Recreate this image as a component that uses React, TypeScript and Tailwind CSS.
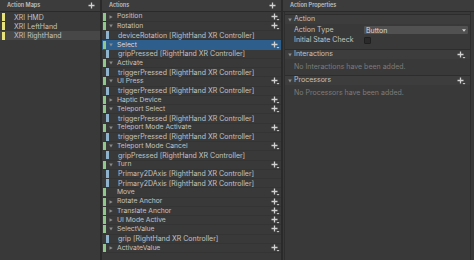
import clsx from 'clsx'

type Row = {
  label: string
  kind: 'action' | 'binding'
  arrow?: 'right' | 'down'
  selected?: boolean
  noPlus?: boolean
}

const ACTIONS: Row[] = [
  { label: 'Position', kind: 'action', arrow: 'right' },
  { label: 'Rotation', kind: 'action', arrow: 'down' },
  { label: 'deviceRotation [RightHand XR Controller]', kind: 'binding' },
  { label: 'Select', kind: 'action', arrow: 'down', selected: true },
  { label: 'gripPressed [RightHand XR Controller]', kind: 'binding' },
  { label: 'Activate', kind: 'action', arrow: 'down', noPlus: true },
  { label: 'triggerPressed [RightHand XR Controller]', kind: 'binding' },
  { label: 'UI Press', kind: 'action', arrow: 'down' },
  { label: 'triggerPressed [RightHand XR Controller]', kind: 'binding' },
  { label: 'Haptic Device', kind: 'action', arrow: 'right' },
  { label: 'Teleport Select', kind: 'action', arrow: 'down' },
  { label: 'triggerPressed [RightHand XR Controller]', kind: 'binding' },
  { label: 'Teleport Mode Activate', kind: 'action', arrow: 'down' },
  { label: 'triggerPressed [RightHand XR Controller]', kind: 'binding' },
  { label: 'Teleport Mode Cancel', kind: 'action', arrow: 'down' },
  { label: 'gripPressed [RightHand XR Controller]', kind: 'binding' },
  { label: 'Turn', kind: 'action', arrow: 'down' },
  { label: 'Primary2DAxis [RightHand XR Controller]', kind: 'binding' },
  { label: 'Primary2DAxis [RightHand XR Controller]', kind: 'binding' },
  { label: 'Move', kind: 'action' },
  { label: 'Rotate Anchor', kind: 'action', arrow: 'right' },
  { label: 'Translate Anchor', kind: 'action', arrow: 'right' },
  { label: 'UI Mode Active', kind: 'action', arrow: 'right' },
  { label: 'SelectValue', kind: 'action', arrow: 'down' },
  { label: 'grip [RightHand XR Controller]', kind: 'binding' },
  { label: 'ActivateValue', kind: 'action', arrow: 'right' },
]

const MAPS = ['XRI HMD', 'XRI LeftHand', 'XRI RightHand']

function PlusIcon({ dropdown = true }: { dropdown?: boolean }) {
  return (
    <svg width="9" height="8" viewBox="0 0 9 8" className="shrink-0">
      <path d="M3.5 0.5v6M0.5 3.5h6" stroke="#d2d2d2" strokeWidth="1.3" />
      {dropdown && <path d="M5.5 6h3l-1.5 1.6z" fill="#d2d2d2" />}
    </svg>
  )
}

function Arrow({ dir }: { dir: 'right' | 'down' }) {
  return (
    <svg width="4" height="4" viewBox="0 0 4 4" className="shrink-0">
      {dir === 'right' ? <path d="M0.5 0.3L3.7 2L0.5 3.7z" fill="#8c8c8c" /> : <path d="M0.2 0.6L3.8 0.6L2 3.6z" fill="#8c8c8c" />}
    </svg>
  )
}

function PanelHeader({ title, plus }: { title: string; plus?: boolean }) {
  return (
    <div className="h-[12px] flex items-center justify-between pl-[7px] pr-[3px] bg-[#3c3c3c] border-b border-[#2a2a2a] text-[5.5px] font-semibold text-[#c0c0c0]">
      <span>{title}</span>
      {plus && <PlusIcon dropdown={false} />}
    </div>
  )
}

function SectionHeader({ title, plus }: { title: string; plus?: boolean }) {
  return (
    <div className="h-[10px] flex items-center pl-[3px] pr-[4px] bg-[#3d3d3d] border-t border-[#2d2d2d]">
      <Arrow dir="down" />
      <span className="ml-[2px] text-[7px] flex-1">{title}</span>
      {plus && <PlusIcon />}
    </div>
  )
}

export default function App() {
  return (
    <div className="w-[474px] h-[260px] flex bg-[#393939] font-['Inter',sans-serif] text-[#c2c2c2] overflow-hidden">
      {/* Action maps */}
      <div className="w-[102px] shrink-0 flex flex-col border-r-2 border-[#2a2a2a]">
        <PanelHeader title="Action Maps" plus />
        <div className="pt-[0.5px]">
          {MAPS.map((m, i) => (
            <div key={m} className={clsx('h-[9.25px] flex items-center', i === 2 && 'bg-[#474747]')}>
              <div className="ml-[2px] w-[3px] h-[8px] bg-[#e8e27c]" />
              <span className="ml-[9px] text-[7px] leading-none">{m}</span>
            </div>
          ))}
        </div>
      </div>

      {/* Actions */}
      <div className="w-[181px] shrink-0 flex flex-col border-r-2 border-[#2a2a2a]">
        <PanelHeader title="Actions" plus />
        <div className="pt-[0.5px]">
          {ACTIONS.map((r, i) => (
            <div
              key={i}
              className={clsx(
                'h-[9.25px] flex items-center',
                r.selected ? 'bg-[#2d5e8c] text-[#dcdcdc]' : 'border-b border-[#343434]'
              )}
            >
              {r.kind === 'action' ? (
                <>
                  <div className="ml-[1px] w-[3px] h-[8px] bg-[#8fc88a]" />
                  <div className="w-[8px] flex justify-center ml-[1px]">{r.arrow && <Arrow dir={r.arrow} />}</div>
                  <span className="ml-[2px] text-[6.75px] leading-none flex-1">{r.label}</span>
                  {!r.noPlus && <span className="mr-[1px]"><PlusIcon /></span>}
                </>
              ) : (
                <>
                  <div className="ml-[4px] w-[3px] h-[8px] bg-[#8fb3cc]" />
                  <span className="ml-[9px] text-[7px] leading-none">{r.label}</span>
                </>
              )}
            </div>
          ))}
        </div>
      </div>

      {/* Action properties */}
      <div className="flex-1 flex flex-col">
        <PanelHeader title="Action Properties" />
        <div className="flex-1 ml-[1px] mr-[3px] border-x border-[#2e2e2e] pt-[2px]">
          <SectionHeader title="Action" />
          <div className="h-[10px] mt-[1px] flex items-center pl-[9px] pr-[2px]">
            <span className="w-[70px] text-[7px]">Action Type</span>
            <div className="flex-1 h-[8px] bg-[#515151] rounded-[1px] flex items-center justify-between px-[2px]">
              <span className="text-[7px] text-[#d8d8d8] leading-none">Button</span>
              <svg width="4" height="3" viewBox="0 0 4 3"><path d="M0 0.3h4L2 2.7z" fill="#d0d0d0" /></svg>
            </div>
          </div>
          <div className="h-[11px] flex items-center pl-[9px]">
            <span className="w-[70px] text-[7px]">Initial State Check</span>
            <div className="w-[7px] h-[7px] bg-[#2a2a2a] border border-[#1f1f1f] rounded-[1px]" />
          </div>
          <div className="mt-[3px]">
            <SectionHeader title="Interactions" plus />
          </div>
          <div className="h-[16px] flex items-center pl-[9px] text-[7px] text-[#7c7c7c]">
            No Interactions have been added.
          </div>
          <SectionHeader title="Processors" plus />
          <div className="h-[16px] flex items-center pl-[9px] text-[7px] text-[#7c7c7c]">
            No Processors have been added.
          </div>
        </div>
      </div>
    </div>
  )
}
